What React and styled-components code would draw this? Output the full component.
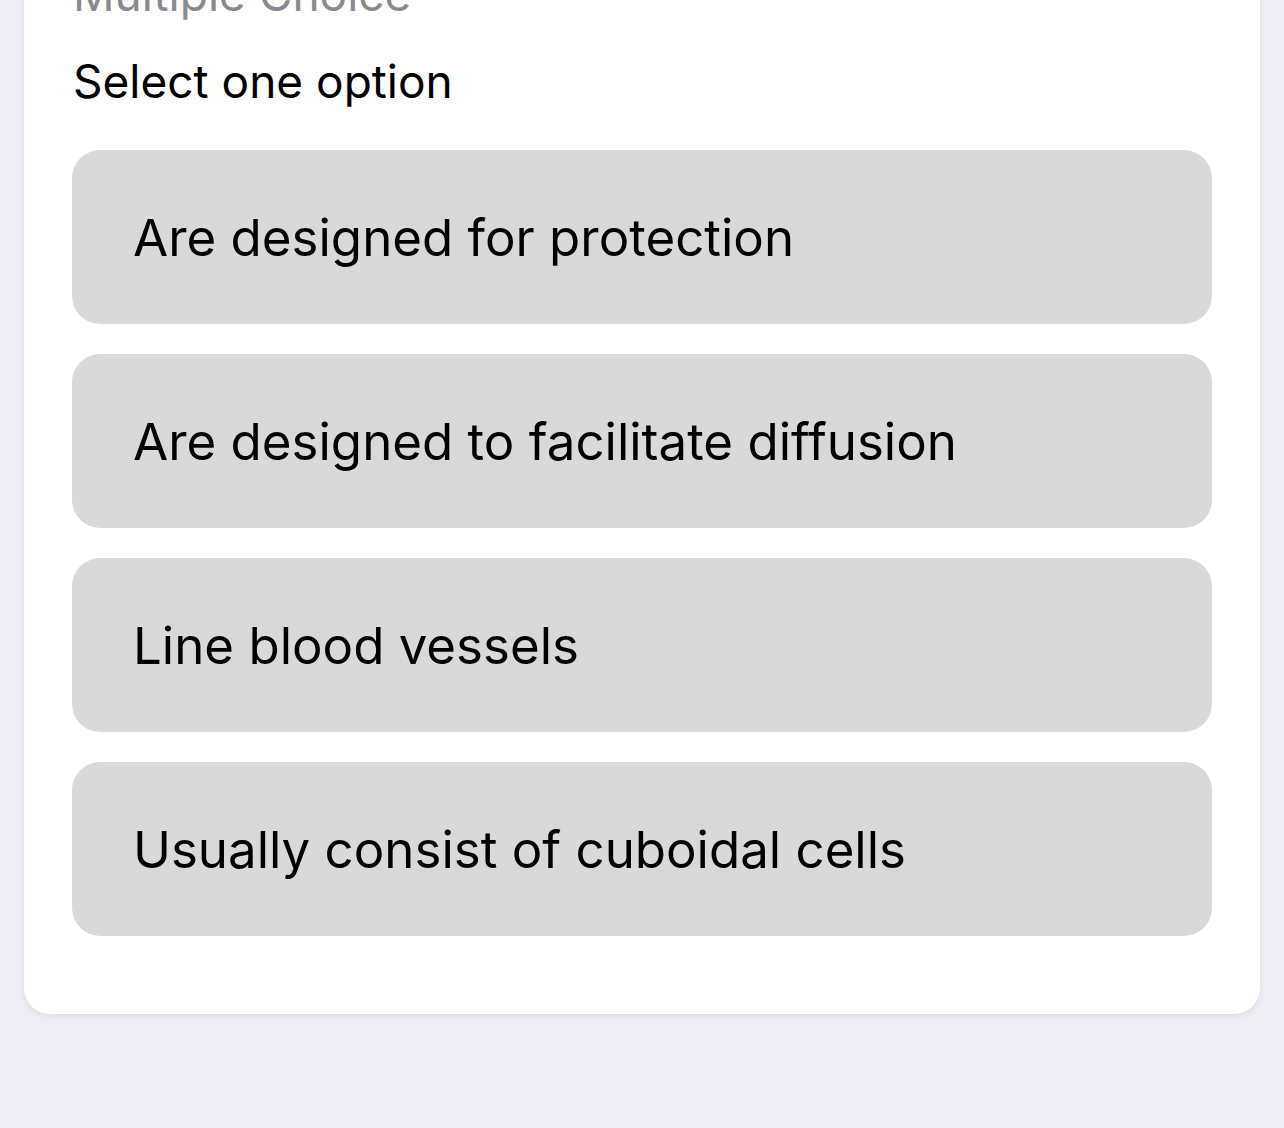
import React from "react";
import styled, { createGlobalStyle } from "styled-components";

const Global = createGlobalStyle`
  html, body { margin: 0; padding: 0; background: #efeef4; overflow: hidden; }
  body { font-family: Inter, "Noto Sans", sans-serif; -webkit-font-smoothing: antialiased; }
`;

const Page = styled.div`
  width: 1284px;
  height: 1128px;
  overflow: hidden;
  background: #efeef4;
  padding: 0 24px;
  box-sizing: border-box;
`;

const Card = styled.section`
  margin-top: -34px;
  background: #ffffff;
  border-radius: 0 0 26px 26px;
  box-shadow: 0 2px 6px rgba(0, 0, 0, 0.08);
  padding: 0 48px 78px;
  display: flex;
  flex-direction: column;
`;

const Title = styled.h2`
  margin: 0;
  font-size: 46px;
  line-height: 56px;
  font-weight: 400;
  color: #8a8a8e;
  padding-left: 1px;
`;

const Prompt = styled.p`
  margin: 31px 0 0;
  font-size: 46px;
  line-height: 56px;
  font-weight: 400;
  color: #000;
  padding-left: 1px;
`;

const Options = styled.div`
  margin-top: 41px;
  display: flex;
  flex-direction: column;
  gap: 30px;
`;

const Option = styled.button`
  all: unset;
  box-sizing: border-box;
  height: 174px;
  background: #d9d9d9;
  border-radius: 28px;
  padding: 0 0 0 61px;
  display: flex;
  align-items: center;
  font-family: Inter, "Noto Sans", sans-serif;
  font-size: 51px;
  color: #000;
  cursor: pointer;
`;

const options = [
  "Are designed for protection",
  "Are designed to facilitate diffusion",
  "Line blood vessels",
  "Usually consist of cuboidal cells",
];

export default function App() {
  return (
    <Page>
      <Global />
      <Card>
        <Title>Multiple Choice</Title>
        <Prompt>Select one option</Prompt>
        <Options>
          {options.map((o) => (
            <Option key={o}>{o}</Option>
          ))}
        </Options>
      </Card>
    </Page>
  );
}
